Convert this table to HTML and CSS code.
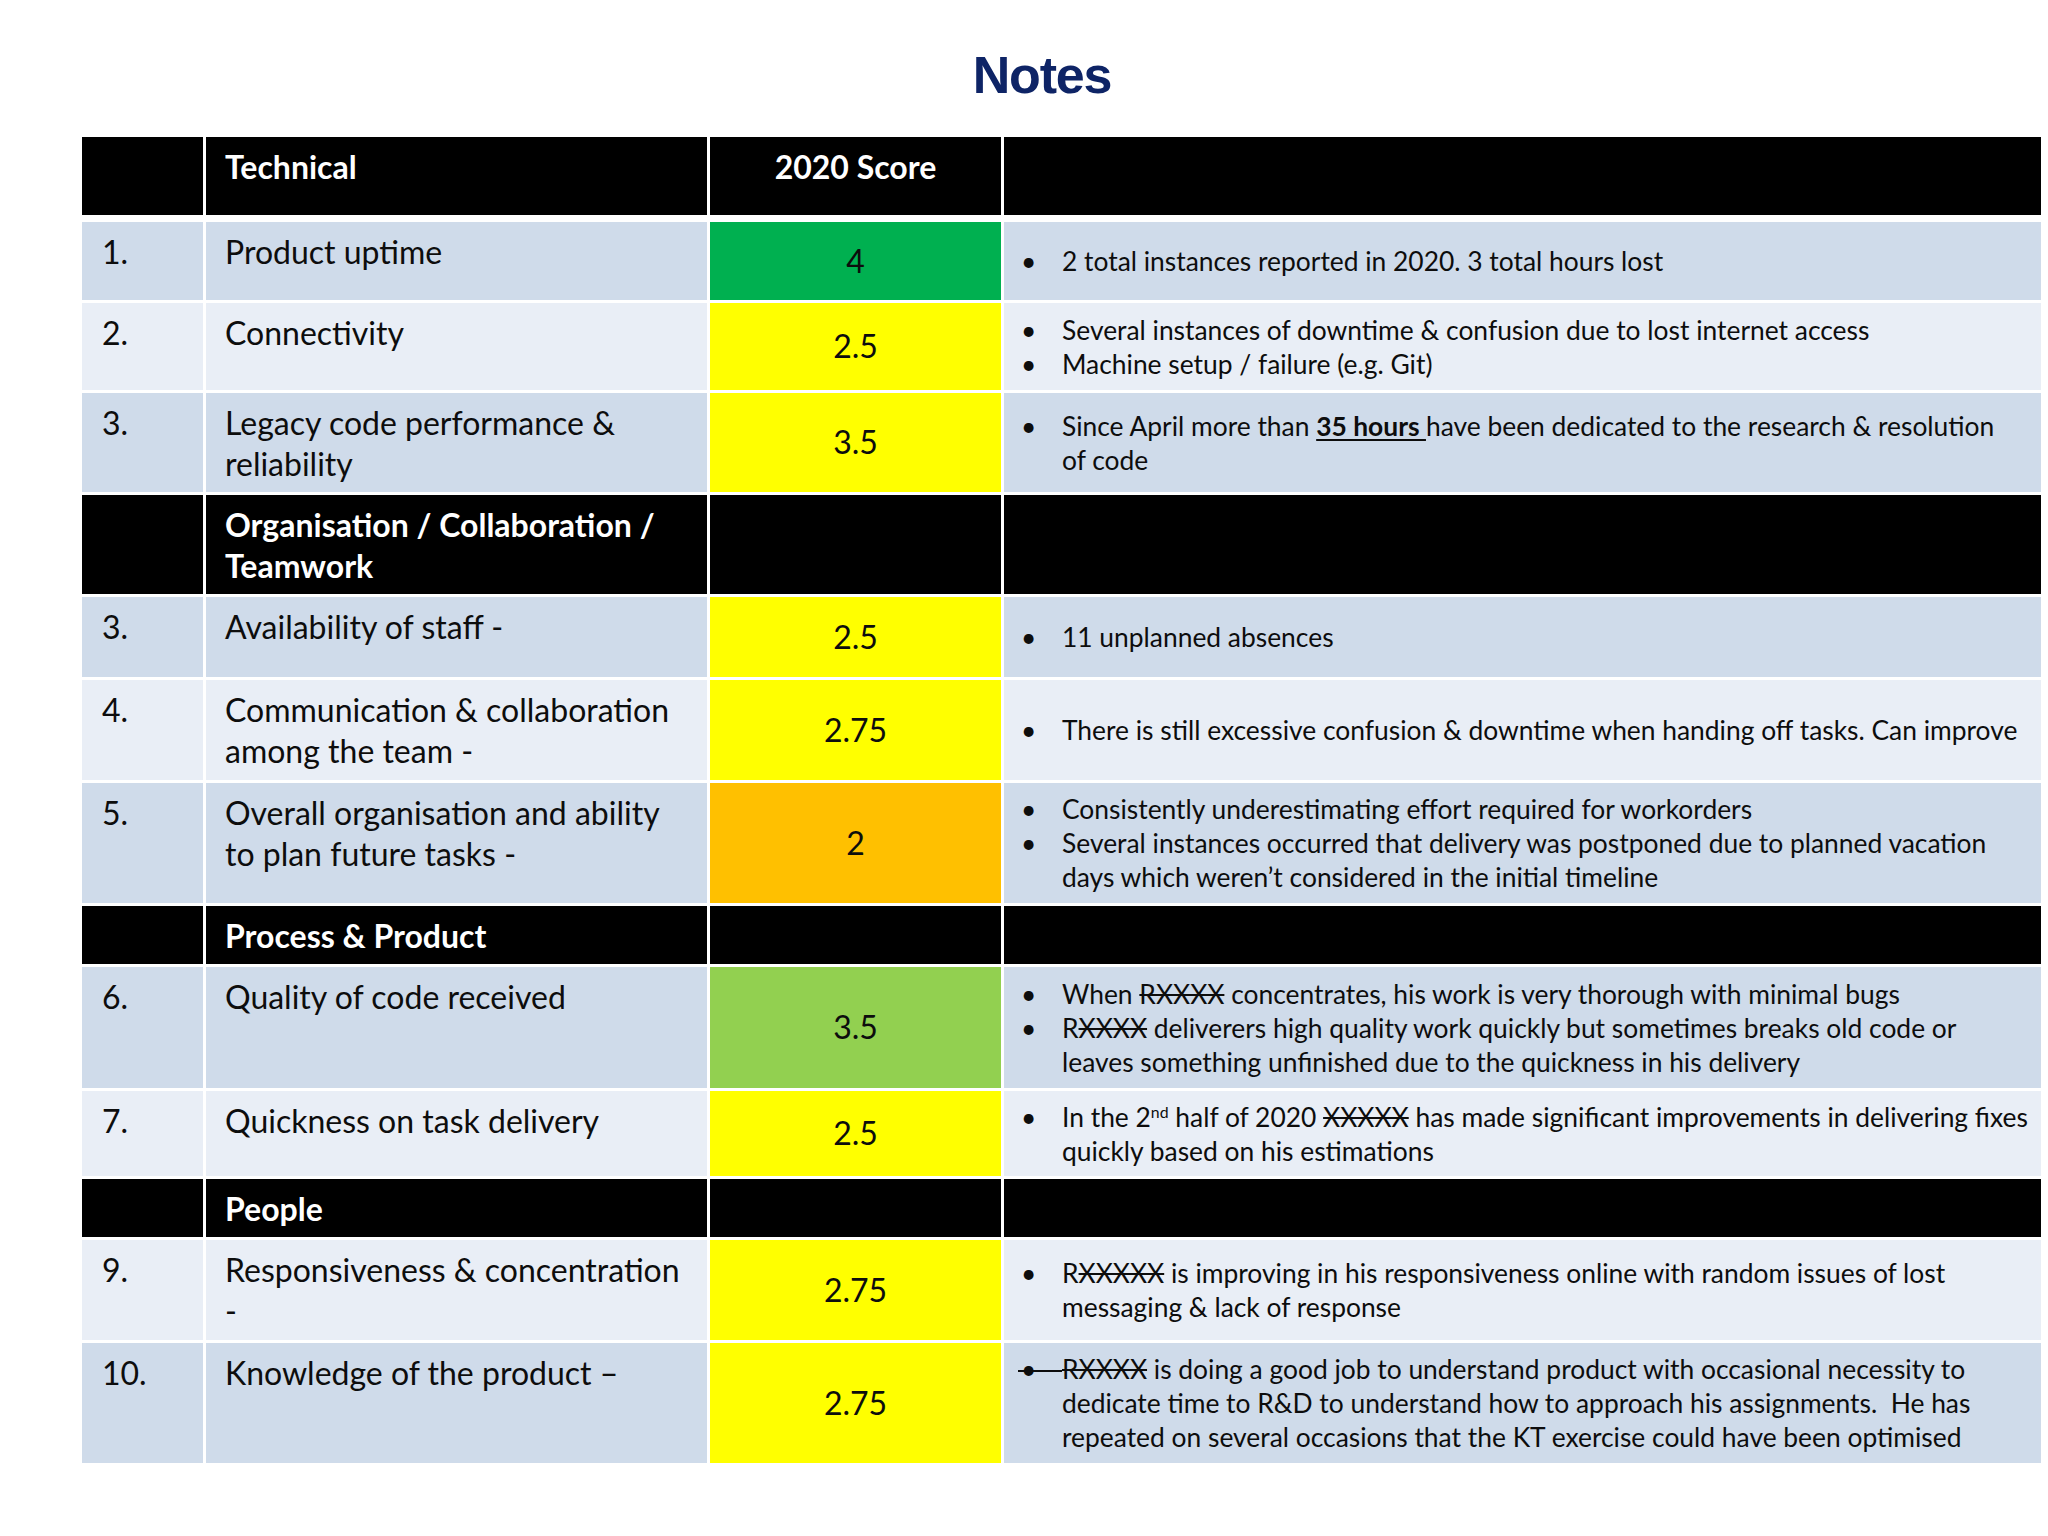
FILE: index.html
```html
<!DOCTYPE html>
<html lang="en">
<head>
<meta charset="utf-8">
<title>Notes</title>
<link rel="stylesheet" href="styles.css">
</head>
<body>
<div class="page">
  <h1 class="title">Notes</h1>
  <div class="table">
    <!-- header -->
    <div class="cell hd"></div>
    <div class="cell hd cat">Technical</div>
    <div class="cell hd score-h">2020 Score</div>
    <div class="cell hd"></div>

    <div class="cell num band-a">1.</div>
    <div class="cell cat band-a">Product uptime</div>
    <div class="cell score green">4</div>
    <div class="cell notes band-a"><ul><li><span class="dot">•</span><span>2 total instances reported in 2020. 3 total hours lost</span></li></ul></div>

    <div class="cell num band-b">2.</div>
    <div class="cell cat band-b">Connectivity</div>
    <div class="cell score yellow">2.5</div>
    <div class="cell notes band-b"><ul><li><span class="dot">•</span><span>Several instances of downtime &amp; confusion due to lost internet access</span></li><li><span class="dot">•</span><span>Machine setup / failure (e.g. Git)</span></li></ul></div>

    <div class="cell num band-a">3.</div>
    <div class="cell cat band-a">Legacy code performance &amp;<br>reliability</div>
    <div class="cell score yellow">3.5</div>
    <div class="cell notes band-a"><ul><li><span class="dot">•</span><span>Since April more than <b class="ul">35 hours </b>have been dedicated to the research &amp; resolution<br>of code</span></li></ul></div>

    <!-- section -->
    <div class="cell sec"></div>
    <div class="cell sec cat">Organisation / Collaboration /<br>Teamwork</div>
    <div class="cell sec"></div>
    <div class="cell sec"></div>

    <div class="cell num band-a">3.</div>
    <div class="cell cat band-a">Availability of staff -</div>
    <div class="cell score yellow">2.5</div>
    <div class="cell notes band-a"><ul><li><span class="dot">•</span><span>11 unplanned absences</span></li></ul></div>

    <div class="cell num band-b">4.</div>
    <div class="cell cat band-b">Communication &amp; collaboration<br>among the team -</div>
    <div class="cell score yellow">2.75</div>
    <div class="cell notes band-b"><ul><li><span class="dot">•</span><span>There is still excessive confusion &amp; downtime when handing off tasks. Can improve</span></li></ul></div>

    <div class="cell num band-a">5.</div>
    <div class="cell cat band-a">Overall organisation and ability<br>to plan future tasks -</div>
    <div class="cell score orange">2</div>
    <div class="cell notes band-a"><ul><li><span class="dot">•</span><span>Consistently underestimating effort required for workorders</span></li><li><span class="dot">•</span><span>Several instances occurred that delivery was postponed due to planned vacation<br>days which weren’t considered in the initial timeline</span></li></ul></div>

    <!-- section -->
    <div class="cell sec"></div>
    <div class="cell sec cat">Process &amp; Product</div>
    <div class="cell sec"></div>
    <div class="cell sec"></div>

    <div class="cell num band-a">6.</div>
    <div class="cell cat band-a">Quality of code received</div>
    <div class="cell score lgreen">3.5</div>
    <div class="cell notes band-a"><ul><li><span class="dot">•</span><span>When <s>RXXXX</s> concentrates, his work is very thorough with minimal bugs</span></li><li><span class="dot">•</span><span>R<s>XXXX</s> deliverers high quality work quickly but sometimes breaks old code or<br>leaves something unfinished due to the quickness in his delivery</span></li></ul></div>

    <div class="cell num band-b">7.</div>
    <div class="cell cat band-b">Quickness on task delivery</div>
    <div class="cell score yellow">2.5</div>
    <div class="cell notes band-b"><ul><li><span class="dot">•</span><span>In the 2<sup>nd</sup> half of 2020 <s>XXXXX</s> has made significant improvements in delivering fixes<br>quickly based on his estimations</span></li></ul></div>

    <!-- section -->
    <div class="cell sec"></div>
    <div class="cell sec cat">People</div>
    <div class="cell sec"></div>
    <div class="cell sec"></div>

    <div class="cell num band-b">9.</div>
    <div class="cell cat band-b">Responsiveness &amp; concentration<br>-</div>
    <div class="cell score yellow">2.75</div>
    <div class="cell notes band-b"><ul><li><span class="dot">•</span><span>R<s>XXXXX</s> is improving in his responsiveness online with random issues of lost<br>messaging &amp; lack of response</span></li></ul></div>

    <div class="cell num band-a">10.</div>
    <div class="cell cat band-a">Knowledge of the product –</div>
    <div class="cell score yellow">2.75</div>
    <div class="cell notes band-a"><ul><li><span class="dot struck">•</span><span><s>RXXXX</s> is doing a good job to understand product with occasional necessity to<br>dedicate time to R&amp;D to understand how to approach his assignments.&nbsp; He has<br>repeated on several occasions that the KT exercise could have been optimised</span></li></ul></div>
  </div>
</div>
</body>
</html>
```

FILE: styles.css
```css
* { box-sizing: border-box; }

body {
  margin: 0;
  background: #ffffff;
  font-family: Lato, "Liberation Sans", sans-serif;
  color: #0d0d0d;
}

.page {
  width: 2048px;
  height: 1536px;
  padding-left: 82px;
}

.title {
  margin: 0;
  height: 137px;
  padding-top: 49px;
  padding-right: 46px;
  text-align: center;
  font-family: "Liberation Sans", Arial, sans-serif;
  font-weight: 700;
  font-size: 52px;
  line-height: 52px;
  letter-spacing: -1.2px;
  color: #0e2466;
}

.table {
  display: grid;
  width: 1959px;
  grid-template-columns: 121px 501px 291px 1037px;
  grid-template-rows: 82px 78px 87px 99px 99px 80px 100px 120px 58px 121px 85px 58px 100px 120px;
  column-gap: 3px;
  row-gap: 3px;
}

.cell {
  font-size: 32px;
  line-height: 40.5px;
  white-space: nowrap;
}

.hd {
  height: 78px;
  background: #000;
  color: #fff;
  font-weight: 700;
}

.sec {
  background: #000;
  color: #fff;
  font-weight: 700;
}

.num {
  padding: 10px 0 0 20px;
}

.cat {
  padding: 10px 0 0 19px;
}

.score-h {
  padding-top: 10px;
  text-align: center;
}

.band-a { background: #cfdbea; }
.band-b { background: #e9eef6; }

.score {
  display: flex;
  align-items: center;
  justify-content: center;
}

.green { background: #00b050; }
.yellow { background: #ffff00; }
.orange { background: #ffc000; }
.lgreen { background: #92d050; }

.notes {
  display: flex;
  align-items: center;
  padding-left: 17px;
  font-size: 26.4px;
  line-height: 34px;
}

.notes ul {
  list-style: none;
  margin: 0;
  padding: 0;
}

.notes li {
  display: flex;
}

.dot {
  flex: 0 0 41px;
  position: relative;
}

.dot.struck::after {
  content: "";
  position: absolute;
  left: -3px;
  right: 0;
  top: 18px;
  height: 2px;
  background: #0d0d0d;
}

.ul {
  font-weight: 700;
  text-decoration: underline;
  text-decoration-thickness: 2px;
  text-underline-offset: 3px;
}

s {
  text-decoration-thickness: 2px;
}

sup {
  font-size: 0.6em;
  line-height: 0;
  vertical-align: 0.6em;
}
```
